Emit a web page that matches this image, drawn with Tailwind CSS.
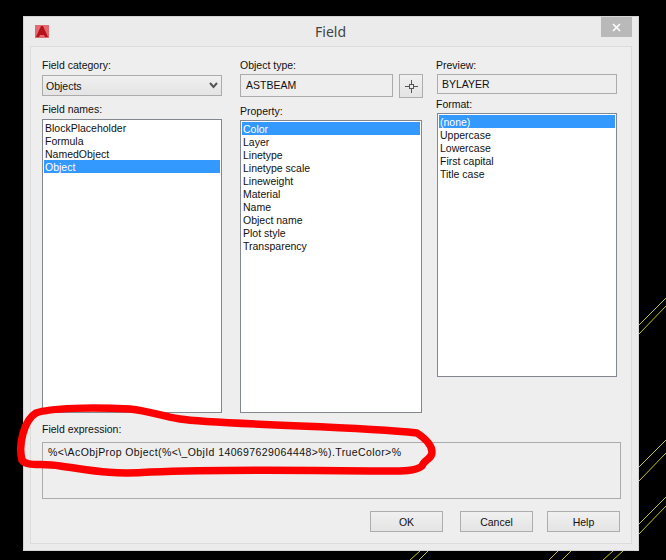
<!DOCTYPE html>
<html lang="en" class="h-full bg-black">
<head>
  <meta charset="UTF-8" />
  <title>Field</title>
  <script src="https://cdn.jsdelivr.net/npm/@tailwindcss/browser@4"></script>
</head>
<body class="relative w-[666px] h-[560px] overflow-hidden bg-black font-['Liberation_Sans',sans-serif] text-[10.5px] leading-[13px] text-[#111]">

  <!-- drawing behind the dialog -->
  <svg class="absolute inset-0" width="666" height="560" fill="none" stroke="#c8c814" stroke-width="1">
    <path d="M639 325L666 298M639 334L666 306M639 467L666 440M639 481L666 453M639 524L666 497M639 534L666 506" />
    <path d="M410 560L420 551M419 560L428 551M549 560L558 551M562 560L571 551M603 560L613 551M613 560L623 551" />
  </svg>

  <!-- dialog -->
  <div class="absolute left-[23px] top-[16px] w-[616px] h-[535px] bg-[#ebebeb] border border-[#d4d4d4] flex flex-col">
    <div class="relative h-[29px] shrink-0 flex items-center justify-center">
      <svg class="absolute left-[11px] top-[8px]" width="14" height="13" viewBox="0 0 14 13">
        <rect width="14" height="13" fill="#e26a70" />
        <path d="M1 12L6 1H8L13 12H10L9 10H5L4 12Z" fill="#b5121b" />
      </svg>
      <span class="font-['Noto_Sans',sans-serif] text-[14px] text-[#444] ml-[-1px]">Field</span>
      <div class="absolute right-[6px] top-0 w-[31px] h-[20px] bg-[#b9b9b9] flex items-center justify-center">
        <svg width="9" height="9" viewBox="0 0 9 9" stroke="#fff" stroke-width="1.6"><path d="M1 1L8 8M8 1L1 8" /></svg>
      </div>
    </div>

    <div class="mx-[6px] h-[498px] bg-[#eeeeee] border border-[#dcdcdc] px-[11px] pt-[12px]">
      <div class="flex h-[354px]">
        <!-- left column -->
        <div class="w-[180px] flex flex-col">
          <label class="h-[16px]">Field category:</label>
          <div class="h-[21px] border border-[#ababab] bg-gradient-to-b from-[#f0f0f0] to-[#e4e4e4] flex items-center justify-between pl-[3px] pr-[3px]">
            <span class="pt-px">Objects</span>
            <svg width="9" height="7" viewBox="0 0 9 7" fill="none" stroke="#555" stroke-width="2"><path d="M1 1L4.5 5L8 1" /></svg>
          </div>
          <label class="h-[13px] mt-[7px]">Field names:</label>
          <div class="mt-[3px] flex-1 border border-[#828790] bg-white p-px [&>div]:h-[13px] [&>div]:leading-[15px]">
            <div class="pl-px">BlockPlaceholder</div>
            <div class="pl-px">Formula</div>
            <div class="pl-px">NamedObject</div>
            <div class="pl-px bg-[#3399ff] text-white">Object</div>
          </div>
        </div>

        <!-- middle column -->
        <div class="w-[183px] ml-[18px] flex flex-col">
          <label class="h-[15px]">Object type:</label>
          <div class="flex gap-[6px]">
            <div class="w-[153px] h-[23px] border border-[#ababab] bg-[#eeeeee] px-[5px] pb-px flex items-center">ASTBEAM</div>
            <div class="w-[24px] h-[24px] border border-[#adadad] bg-gradient-to-b from-[#f0f0f0] to-[#e4e4e4] flex items-center justify-center">
              <svg width="13" height="13" viewBox="0 0 13 13" fill="none" stroke="#555"><path d="M0 6.5H4M9 6.5H13M6.5 0V4M6.5 9V13" /><rect x="4.5" y="4.5" width="4" height="4" /></svg>
            </div>
          </div>
          <label class="h-[13px] mt-[7px]">Property:</label>
          <div class="mt-[2px] w-[182px] flex-1 border border-[#828790] bg-white p-px [&>div]:h-[13px] [&>div]:leading-[15px]">
            <div class="pl-px bg-[#3399ff] text-white">Color</div>
            <div class="pl-px">Layer</div>
            <div class="pl-px">Linetype</div>
            <div class="pl-px">Linetype scale</div>
            <div class="pl-px">Lineweight</div>
            <div class="pl-px">Material</div>
            <div class="pl-px">Name</div>
            <div class="pl-px">Object name</div>
            <div class="pl-px">Plot style</div>
            <div class="pl-px">Transparency</div>
          </div>
        </div>

        <!-- right column -->
        <div class="w-[180px] ml-[14px] flex flex-col">
          <label class="h-[15px] -ml-px">Preview:</label>
          <div class="h-[20px] border border-[#ababab] bg-[#eeeeee] px-[4px] flex items-center">BYLAYER</div>
          <label class="h-[13px] mt-[4px] -ml-px">Format:</label>
          <div class="mt-[2px] h-[264px] border border-[#828790] bg-white p-px [&>div]:h-[13px] [&>div]:leading-[15px]">
            <div class="pl-px bg-[#3399ff] text-white">(none)</div>
            <div class="pl-px">Uppercase</div>
            <div class="pl-px">Lowercase</div>
            <div class="pl-px">First capital</div>
            <div class="pl-px">Title case</div>
          </div>
        </div>
      </div>

      <label class="block h-[13px] mt-[10px]">Field expression:</label>
      <div class="mt-[6px] w-[579px] h-[57px] border border-[#ababab] bg-[#eeeeee] px-[5px] pt-[3px] tracking-[0.4px]">%&lt;\AcObjProp Object(%&lt;\_ObjId 140697629064448&gt;%).TrueColor&gt;%</div>

      <div class="flex justify-end gap-[14px] mt-[12px]">
        <button class="w-[73px] h-[21px] mr-[3px] pt-px border border-[#adadad] bg-gradient-to-b from-[#f0f0f0] to-[#e4e4e4]">OK</button>
        <button class="w-[73px] h-[21px] pt-px border border-[#adadad] bg-gradient-to-b from-[#f0f0f0] to-[#e4e4e4]">Cancel</button>
        <button class="w-[73px] h-[21px] pt-px border border-[#adadad] bg-gradient-to-b from-[#f0f0f0] to-[#e4e4e4]">Help</button>
      </div>
    </div>
  </div>

  <!-- hand drawn red annotation -->
  <svg class="absolute inset-0 pointer-events-none" width="666" height="560" fill="none">
    <path d="M36 413C50 408 90 407 130 409C150 411 160 416 180 419C200 422 250 424 300 426C350 428 390 430 417 433C426 439 432 445 432 452C432 460 425 458 422 466C415 472 400 471 370 471C300 470 200 470 150 472C110 475 90 470 60 466C40 463 27 467 22 460C18 445 24 420 36 413Z" stroke="#ff0000" stroke-width="7.5" stroke-linejoin="round" />
  </svg>
</body>
</html>
